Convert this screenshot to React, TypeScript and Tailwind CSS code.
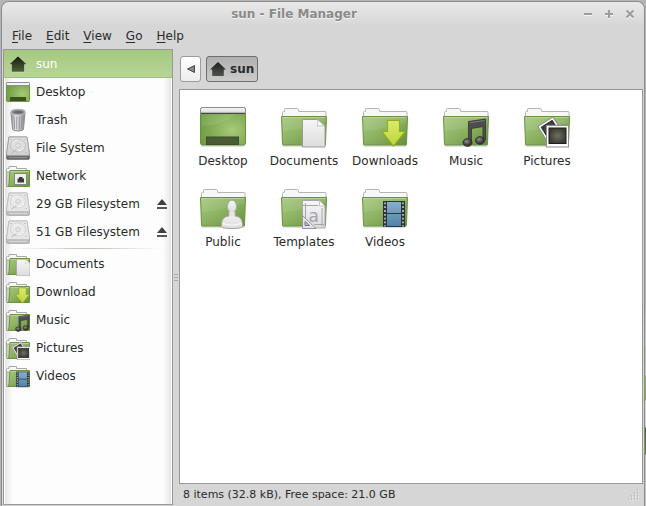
import React from "react";
import clsx from "clsx";

type Emblem =
  | "document"
  | "download"
  | "music"
  | "pictures"
  | "public"
  | "templates"
  | "videos";

type IconName = Emblem | "desktop";

const menus = ["File", "Edit", "View", "Go", "Help"];

const places = [
  { name: "sun", icon: "home" },
  { name: "Desktop", icon: "desktop" },
  { name: "Trash", icon: "trash" },
  { name: "File System", icon: "drive" },
  { name: "Network", icon: "network" },
  { name: "29 GB Filesystem", icon: "volume", eject: true },
  { name: "51 GB Filesystem", icon: "volume", eject: true },
];

const bookmarks = [
  { name: "Documents", icon: "document" },
  { name: "Download", icon: "download" },
  { name: "Music", icon: "music" },
  { name: "Pictures", icon: "pictures" },
  { name: "Videos", icon: "videos" },
];

const files: { name: string; icon: IconName }[] = [
  { name: "Desktop", icon: "desktop" },
  { name: "Documents", icon: "document" },
  { name: "Downloads", icon: "download" },
  { name: "Music", icon: "music" },
  { name: "Pictures", icon: "pictures" },
  { name: "Public", icon: "public" },
  { name: "Templates", icon: "templates" },
  { name: "Videos", icon: "videos" },
];

// Gradients shared by every icon on the page
function IconDefs() {
  return (
    <svg width="0" height="0" className="absolute" aria-hidden="true">
      <defs>
        <radialGradient id="green" cx="0.7" cy="0.6" r="0.75">
          <stop offset="0" stopColor="#a6ca7a" />
          <stop offset="0.6" stopColor="#83ad54" />
          <stop offset="1" stopColor="#6f9a43" />
        </radialGradient>
        <linearGradient id="folder" x1="0" y1="0" x2="1" y2="1">
          <stop offset="0" stopColor="#a8c983" />
          <stop offset="0.5" stopColor="#8bb160" />
          <stop offset="1" stopColor="#648f39" />
        </linearGradient>
        <linearGradient id="paper" x1="0" y1="0" x2="0" y2="1">
          <stop offset="0" stopColor="#f6f6f6" />
          <stop offset="1" stopColor="#dcdcdc" />
        </linearGradient>
        <linearGradient id="metal" x1="0" y1="0" x2="1" y2="0">
          <stop offset="0" stopColor="#97979b" />
          <stop offset="0.35" stopColor="#e6e6ea" />
          <stop offset="0.65" stopColor="#c0c0c4" />
          <stop offset="1" stopColor="#838387" />
        </linearGradient>
        <linearGradient id="plate" x1="0" y1="0" x2="0" y2="1">
          <stop offset="0" stopColor="#e2e2e2" />
          <stop offset="1" stopColor="#cfcfcf" />
        </linearGradient>
        <linearGradient id="arrow" x1="0" y1="0" x2="0" y2="1">
          <stop offset="0" stopColor="#dcea6c" />
          <stop offset="1" stopColor="#bcd63a" />
        </linearGradient>
        <linearGradient id="film" x1="0" y1="0" x2="0" y2="1">
          <stop offset="0" stopColor="#86b0cb" />
          <stop offset="1" stopColor="#4f83a8" />
        </linearGradient>
        <linearGradient id="house" x1="0" y1="0" x2="0" y2="1">
          <stop offset="0" stopColor="#1d1f1b" />
          <stop offset="1" stopColor="#50534d" />
        </linearGradient>
        <linearGradient id="houseGreen" x1="0" y1="0" x2="0" y2="1">
          <stop offset="0" stopColor="#161b10" />
          <stop offset="1" stopColor="#4f6138" />
        </linearGradient>
        <radialGradient id="photo">
          <stop offset="0" stopColor="#6d7061" />
          <stop offset="1" stopColor="#3b3d35" />
        </radialGradient>
        <radialGradient id="note" cx="0.4" cy="0.35">
          <stop offset="0" stopColor="#8f8f8f" />
          <stop offset="1" stopColor="#383838" />
        </radialGradient>
      </defs>
    </svg>
  );
}

function EmblemShape({ name }: { name: Emblem }) {
  if (name === "document") {
    return (
      <g>
        <path d="M22.5 15.5h15l7.5 7v20.5h-22.5z" fill="url(#paper)" stroke="#9a9a9e" />
        <path d="M37.5 15.5q1 4-.5 6.500q4-1 8 .5z" fill="#fff" stroke="#b9b9bd" strokeWidth="0.8" />
      </g>
    );
  }
  if (name === "download") {
    return (
      <path
        d="M26.5 16.5h12v11h5.5l-11.5 14.5-11.5-14.5h5.5z"
        fill="url(#arrow)"
        stroke="#93ad1c"
        strokeWidth="1.1"
      />
    );
  }
  if (name === "music") {
    return (
      <g>
        <path
          d="M26.5 17.500L43.500 15v21h-2.500V22.500L29.500 24.500V38.500H26.500z"
          fill="#4d4d4d"
          stroke="#333"
          strokeWidth="0.8"
        />
        <path d="M27.5 18.700l15-2.200" stroke="#7d7d7d" strokeWidth="1" />
        <ellipse cx="25.500" cy="38.5" rx="4.500" ry="3.800" fill="url(#note)" stroke="#303030" />
        <ellipse cx="38" cy="36.5" rx="4.500" ry="3.800" fill="url(#note)" stroke="#303030" />
      </g>
    );
  }
  if (name === "pictures") {
    return (
      <g>
        <g transform="rotate(-32 27 26)">
          <rect x="18.5" y="16.5" width="18" height="18" fill="#f5f5f5" stroke="#8a8a90" />
          <rect x="21" y="19" width="13" height="12" fill="url(#photo)" stroke="#222" strokeWidth="0.8" />
        </g>
        <rect x="23.5" y="21.5" width="22" height="21.5" fill="#fbfbfb" stroke="#8e8e94" />
        <rect x="26" y="24" width="17" height="15.5" fill="url(#photo)" stroke="#1d1d1d" />
      </g>
    );
  }
  if (name === "public") {
    return (
      <g fill="url(#paper)" stroke="#a9a9a9">
        <path d="M30 26.5v4.5q-7 .5-7.500 8v3q2 1.500 10.500 1.500t10.500-1.500v-3q-.5-7.500-7.500-8v-4.500" />
        <ellipse cx="33" cy="21.5" rx="4.5" ry="6.3" />
        <path d="M30.600 26.500h4.800v5h-4.800z" fill="#e6e6e6" stroke="none" />
        <path d="M24 38.5q9 3.500 18 0" fill="none" stroke="#fff" strokeWidth="1" />
      </g>
    );
  }
  if (name === "templates") {
    return (
      <g>
        <path d="M22.5 15.5h17l5.5 5.5v22h-22.5z" fill="url(#paper)" stroke="#a6a6b0" />
        <path d="M39.5 15.5v5.500h5.500z" fill="#fff" stroke="#b6b6c0" strokeWidth="0.8" />
        <path d="M25.5 18v22M42 23v18M23 20.5h15M34 39.5h10" fill="none" stroke="#a6a6a9" />
        {/* specimen letter on the sheet */}
        <text
          x="28.500"
          y="36.500"
          fontSize="17"
          fontFamily="DejaVu Sans, sans-serif"
          fill="#a3a3ae"
        >
          a
        </text>
        <path d="M22.5 30.5l13.500 13h-13.500z" fill="#e3e3ea" stroke="#9696a3" />
        <path d="M25 36.500l4.500 4h-4.500z" fill="#c1c1cc" stroke="#777785" />
      </g>
    );
  }
  return (
    <g>
      <rect x="22" y="16" width="22" height="26" fill="#303437" />
      <path d="M26 17h14v11h-14zM26 29h14v12h-14z" fill="url(#film)" />
      <path
        d="M24 17.5v24M42 17.5v24"
        stroke="#a9c0cf"
        strokeWidth="1.8"
        strokeDasharray="1.8 2"
      />
    </g>
  );
}

function LargeIcon({ name }: { name: IconName }) {
  if (name === "desktop") {
    return (
      <svg viewBox="0 0 48 48" className="size-12" aria-hidden="true">
        <rect x="2" y="39" width="44" height="4" rx="2" fill="#000" opacity="0.12" />
        <rect x="1.5" y="3.5" width="45" height="37.5" rx="2" fill="url(#green)" stroke="#6a8f43" />
        <path d="M2.5 22q22-1 34-11.500h-34z" fill="#fff" opacity="0.1" />
        <path d="M1.5 9V5.5q0-2 2-2h41q2 0 2 2V9z" fill="url(#paper)" stroke="#8d8d8d" />
        <path d="M2 9.500h44" stroke="#454b40" />
        <rect x="7.5" y="33" width="32" height="7.5" fill="#4a5c34" stroke="#3b4f27" />
      </svg>
    );
  }
  return (
    <svg viewBox="0 0 48 48" className="size-12" aria-hidden="true">
      <rect x="2" y="39" width="44" height="4" rx="2" fill="#000" opacity="0.12" />
      <path
        d="M2.5 16V8.5q0-1 1-1h1V5.300q0-.8.8-.8h12q.7 0 1 .8l.5 2.200h26.200q1 0 1 1V16z"
        fill="#f7f7f7"
        stroke="#b5b5b5"
      />
      <path d="M1.5 12.5h45l-1 27.500q0 1-1 1h-41q-1 0-1-1z" fill="url(#folder)" stroke="#6a9140" />
      <path d="M2.5 13.5h43" stroke="#c4dca5" opacity="0.7" />
      <path d="M2.5 27q22-2 43-9v-4h-43z" fill="#fff" opacity="0.08" />
      <EmblemShape name={name} />
    </svg>
  );
}

function House({ green }: { green?: boolean }) {
  return (
    <path
      d="M12 4l9 8.500h-2.500v7.500h-13v-7.500h-2.500z"
      fill={green ? "url(#houseGreen)" : "url(#house)"}
      stroke={green ? "#dbeac9" : "none"}
      strokeWidth="0.5"
    />
  );
}

function DriveIcon({ faded }: { faded?: boolean }) {
  return (
    <g>
      <path
        d="M3 1h18l2.500 18v3q0 1.500-1.500 1.500h-20q-1.500 0-1.500-1.500v-3z"
        fill={faded ? "#bdbdbd" : "#6a6a6a"}
        stroke={faded ? "#a9a9a9" : "#777"}
        strokeWidth="0.8"
      />
      <path
        d="M3 1h18l2.500 17q0 1.500-1.500 1.500h-20q-1.500 0-1.500-1.500z"
        fill={faded ? "#e6e6e6" : "url(#plate)"}
        stroke={faded ? "#bcbcbc" : "#a0a0a0"}
        strokeWidth="0.8"
      />
      <ellipse cx="12" cy="9.5" rx="7.5" ry="6.500" fill={faded ? "#eaeaea" : "#dedede"} stroke={faded ? "#cecece" : "#bababa"} strokeWidth="0.8" />
      <path d="M6 7q2-3 6-3M18 12q-2 3-6 3" fill="none" stroke="#f8f8f8" />
      <ellipse cx="12" cy="9.5" rx="2.3" ry="2" fill="#e8e8e8" stroke="#bbb" strokeWidth="0.7" />
      <path d="M5.5 17l5-3.500" stroke="#b8b8b8" />
      <path d="M4.5 3.500h1M18.500 3.500h1M19.500 16.500h1" stroke="#aaa" />
      <path d="M3 21.5h18" stroke={faded ? "#d6d6d6" : "#8f8f8f"} />
    </g>
  );
}

function SmallFolder({ children }: { children?: React.ReactNode }) {
  return (
    <g>
      <path
        d="M.5 20V5.500q0-1 1-1h1.500v-2h7.500v2h10v5"
        fill="#f8f8f8"
        stroke="#a9a9a9"
      />
      <path d="M.5 8v14.500h4V8z" fill="#cdd0c8" stroke="#99a28f" strokeWidth="0.8" />
      <path d="M4 6.500h19.500V22.500h-22q1.500-1 1.500-3z" fill="url(#folder)" stroke="#6a943f" />
      <path d="M4.500 7.500h18.500" stroke="#bfd8a0" strokeWidth="0.8" />
      {children}
    </g>
  );
}

function SmallIcon({ name }: { name: string }) {
  let shape: React.ReactNode;
  switch (name) {
    case "home":
      shape = <House green />;
      break;
    case "desktop":
      shape = (
        <g>
          <rect x="0.5" y="2.500" width="23" height="19" rx="1" fill="url(#green)" stroke="#6f9647" />
          <path d="M.5 5.500v-2q0-1 1-1h21q1 0 1 1v2z" fill="#f4f4f4" stroke="#8f8f8f" />
          <rect x="4" y="17" width="16" height="4" fill="#3c5224" />
        </g>
      );
      break;
    case "trash":
      shape = (
        <g>
          <path d="M5 4l1.500 17q0 2 5.500 2t5.500-2l1.500-17z" fill="url(#metal)" stroke="#8a8a8d" />
          <path d="M8 8l.7 13M10.700 8.500v13M13.300 8.500v13M16 8l-.7 13" stroke="#8c8c90" strokeWidth="0.8" />
          <ellipse cx="12" cy="4" rx="7" ry="2.700" fill="#8a8a8d" stroke="#b3b3b6" strokeWidth="1.2" />
          <ellipse cx="12" cy="4.300" rx="4.500" ry="1.200" fill="#69696c" />
        </g>
      );
      break;
    case "drive":
      shape = <DriveIcon />;
      break;
    case "volume":
      shape = <DriveIcon faded />;
      break;
    case "network":
      shape = (
        <SmallFolder>
          <rect x="8.5" y="9.500" width="12" height="11" fill="#efefef" stroke="#858585" />
          <path d="M11.500 18.500v-4h1.500v-1.500h3.500v1.500h1.500v4z" fill="#3a3a3a" />
        </SmallFolder>
      );
      break;
    default:
      shape = (
        <SmallFolder>
          <g transform="translate(-3 -2) scale(0.6)">
            <EmblemShape name={name as Emblem} />
          </g>
        </SmallFolder>
      );
  }
  return (
    <svg viewBox="0 0 24 24" className="size-6 shrink-0" aria-hidden="true">
      {shape}
    </svg>
  );
}

function PlaceRow({
  name,
  icon,
  eject,
  active,
}: {
  name: string;
  icon: string;
  eject?: boolean;
  active?: boolean;
}) {
  return (
    <li
      className={clsx(
        "flex h-7 items-center pr-1",
        active && "border-b border-[#98c173] bg-linear-to-b from-[#a4c97e] to-[#b7d499] text-white"
      )}
    >
      <button type="button" className="flex flex-1 items-center gap-1.5 pl-0.5 text-left">
        <SmallIcon name={icon} />
        {name}
      </button>
      {eject && (
        <button type="button" aria-label={`Eject ${name}`}>
          <svg viewBox="0 0 12 12" className="size-3" aria-hidden="true">
            <path d="M6 1l5 6h-10z" fill="#3f3f3f" />
            <path d="M1 9h10v2h-10z" fill="#555" />
          </svg>
        </button>
      )}
    </li>
  );
}

function TitleBar() {
  return (
    <header className="flex h-6 items-center bg-linear-to-b from-[#e9e9e9] to-[#d6d6d6] pr-2">
      <h1 className="flex-1 pl-1 text-center text-xs font-bold text-[#8a8a8a] [text-shadow:0_1px_0_#f4f4f4]">
        sun - File Manager
      </h1>
      <div className="flex justify-end gap-[9px]">
        <button type="button" aria-label="Minimize">
          <svg viewBox="0 0 12 12" className="size-3" aria-hidden="true">
            <path d="M2 7.500h8" stroke="#f5f5f5" />
            <path d="M2 6h8" stroke="#9c9c9c" strokeWidth="2" />
          </svg>
        </button>
        <button type="button" aria-label="Maximize">
          <svg viewBox="0 0 12 12" className="size-3" aria-hidden="true">
            <path d="M2 7.500h8M5 10.500h2" stroke="#f5f5f5" />
            <path d="M2 6h8M6 2v8" stroke="#9c9c9c" strokeWidth="2" />
          </svg>
        </button>
        <button type="button" aria-label="Close">
          <svg viewBox="0 0 12 12" className="size-3" aria-hidden="true">
            <path d="M2.500 3.500l7 7M9.500 3.500l-7 7" stroke="#f5f5f5" strokeWidth="2" />
            <path d="M2.500 2.500l7 7M9.500 2.500l-7 7" stroke="#9c9c9c" strokeWidth="2" />
          </svg>
        </button>
      </div>
    </header>
  );
}

function Sidebar() {
  return (
    <nav
      aria-label="Places"
      className="w-[170px] shrink-0 border border-[#979797] bg-[linear-gradient(to_right,#fff_1px,#e6e6e6_1px,#fdfdfd_9px,#fdfdfd_calc(100%-9px),#e6e6e6_calc(100%-1px),#fff_calc(100%-1px))]"
    >
      <ul>
        {places.map((p, i) => (
          <PlaceRow key={p.name} {...p} active={i === 0} />
        ))}
      </ul>
      <hr className="mx-2 mt-0.5 mb-px h-px border-0 bg-[linear-gradient(to_right,transparent,#c3c0b2_50%,transparent)]" />
      <ul>
        {bookmarks.map((b) => (
          <PlaceRow key={b.name} {...b} />
        ))}
      </ul>
    </nav>
  );
}

function ResizeGrip() {
  return (
    <svg viewBox="0 0 12 12" className="size-3" aria-hidden="true">
      <path
        d="M10 1h1M7 4h1M10 4h1M4 7h1M7 7h1M10 7h1M1 10h1M4 10h1M7 10h1M10 10h1"
        stroke="#a9a9a9"
      />
      <path
        d="M11 2h1M8 5h1M11 5h1M5 8h1M8 8h1M11 8h1M2 11h1M5 11h1M8 11h1M11 11h1"
        stroke="#f2f2f2"
      />
    </svg>
  );
}

export default function App() {
  return (
    <div className="flex h-screen bg-[#b5b5b5] pt-px pl-px font-['DejaVu_Sans',sans-serif] text-xs text-[#2b2b2b]">
      <IconDefs />
      <div className="flex min-w-0 flex-1 flex-col overflow-hidden rounded-t-lg border border-b-0 border-[#8c8c8c] bg-[#d6d6d6]">
        <TitleBar />
        <div role="menubar" className="flex h-[23px] items-start pt-0.5 pl-[3px]">
          {menus.map((m) => (
            <button key={m} type="button" role="menuitem" className="px-[7px]">
              <span className="underline underline-offset-2">{m[0]}</span>
              {m.slice(1)}
            </button>
          ))}
        </div>

        <div className="flex min-h-0 flex-1 px-px">
          <div className="flex pb-px">
            <Sidebar />
          </div>
          <div className="flex w-1.5 shrink-0 flex-col items-center justify-center gap-0.5">
            <i className="h-px w-1 bg-[#aaa]" />
            <i className="h-px w-1 bg-[#aaa]" />
            <i className="h-px w-1 bg-[#aaa]" />
          </div>

          <main className="flex min-w-0 flex-1 flex-col">
            <div className="flex h-10 shrink-0 items-center gap-[5px] pl-px">
              <button
                type="button"
                aria-label="Back"
                className="flex h-[26px] w-[21px] items-center justify-center rounded-[3px] border border-[#9b9b9b] bg-linear-to-b from-white to-[#ededed]"
              >
                <svg viewBox="0 0 10 10" className="size-2.5" aria-hidden="true">
                  <path d="M8.500 1.500v7l-7-3.500z" fill="#8b8b8b" stroke="#484848" />
                </svg>
              </button>
              <button
                type="button"
                className="flex h-[26px] items-center gap-1 rounded-[3px] border border-[#6f6f6f] bg-linear-to-b from-[#b0b0b0] to-[#cbcbcb] px-[3px] font-bold"
              >
                <svg viewBox="3 3 18 18" className="size-4" aria-hidden="true">
                  <House />
                </svg>
                sun
              </button>
            </div>

            <section
              aria-label="Files"
              className="min-h-0 flex-1 overflow-hidden border border-[#979797] bg-white"
            >
              <ul className="flex flex-wrap content-start gap-x-px pt-3.5 pl-[3px]">
                {files.map((f) => (
                  <li key={f.name} className="h-[81px] w-20">
                    <button type="button" className="flex w-full flex-col items-center gap-px">
                      <LargeIcon name={f.icon} />
                      {f.name}
                    </button>
                  </li>
                ))}
              </ul>
            </section>

            <footer className="flex h-[22px] shrink-0 items-center justify-between px-1 text-[11px]">
              <p>8 items (32.8 kB), Free space: 21.0 GB</p>
              <ResizeGrip />
            </footer>
          </main>
        </div>
      </div>
      {/* sliver of the desktop behind the window */}
      <div className="w-px bg-[linear-gradient(#b5b5b5_300px,#cbcbcb_345px,#b4c29c_346px,#c5c9bd_374px,#86b84c_375px,#7fa751_399px,#d2d2d2_400px,#d2d2d2_426px,#3f5f24_427px,#5d8a34_453px,#c4c4c4_454px)]" />
    </div>
  );
}
